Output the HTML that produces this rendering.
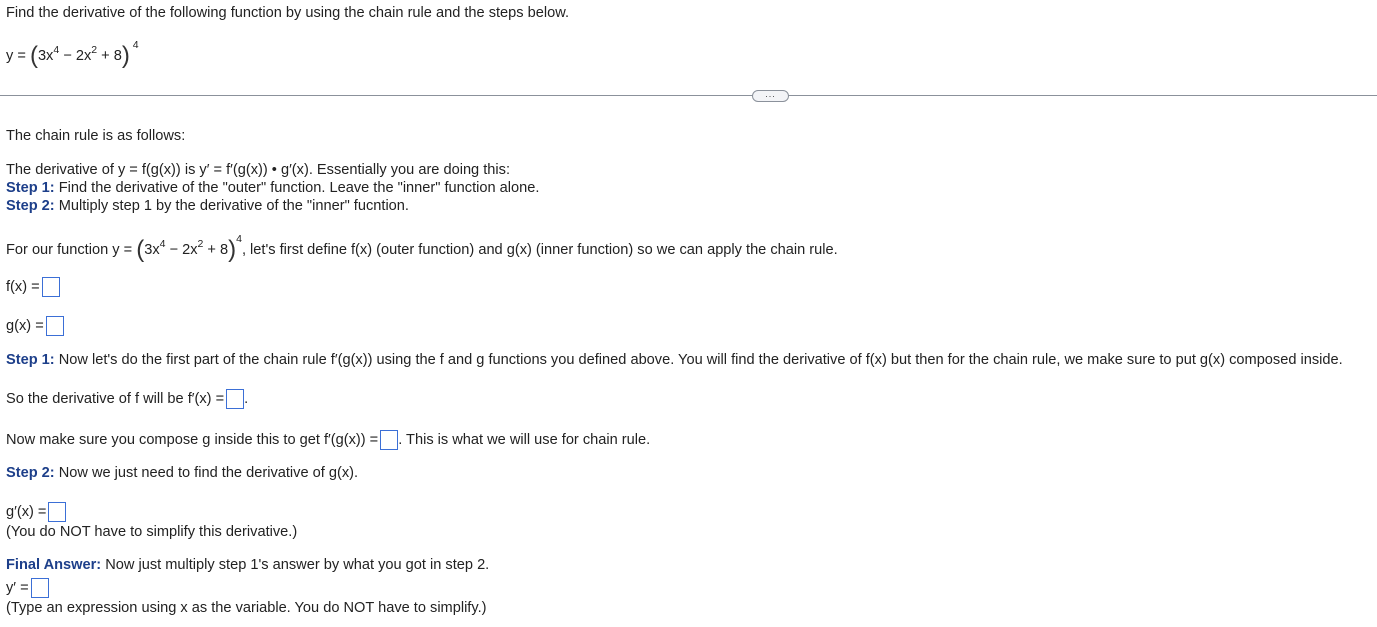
<!DOCTYPE html>
<html><head><style>
body{margin:0;width:1377px;height:627px;background:#fff;font-family:"Liberation Sans",Arial,sans-serif;font-size:14.6px;color:#222;position:relative;overflow:hidden}
.l{position:absolute;left:6px;white-space:nowrap;line-height:16px;margin-top:1px}
b{color:#1d3f8a}
.bx{display:inline-block;width:18px;height:20px;border:1px solid #3b6fd6;vertical-align:middle;margin-left:2px;box-sizing:border-box}
.p{font-size:24px;font-weight:300;vertical-align:-3px;color:#333}
sup{font-size:10.5px;vertical-align:7px;line-height:0}
.hr{position:absolute;left:0;width:1377px;top:95px;height:1px;background:#8b919b}
.pill{position:absolute;left:752px;top:90px;width:35px;height:10px;border:1px solid #8b919b;border-radius:6px;background:#f3f4f7;font-size:9px;line-height:6px;text-align:center;color:#444;letter-spacing:1px}
</style></head><body>
<div class="l" style="top:4px">Find the derivative of the following function by using the chain rule and the steps below.</div>
<div class="l" style="top:44px">y = <span class="p">(</span>3x<sup>4</sup> − 2x<sup>2</sup> + 8<span class="p">)</span><sup style="vertical-align:12px"> 4</sup></div>
<div class="hr"></div><div class="pill">...</div>
<div class="l" style="top:127px">The chain rule is as follows:</div>
<div class="l" style="top:161px">The derivative of y = f(g(x)) is y′ = f′(g(x)) • g′(x). Essentially you are doing this:</div>
<div class="l" style="top:179px"><b>Step 1:</b> Find the derivative of the "outer" function. Leave the "inner" function alone.</div>
<div class="l" style="top:197px"><b>Step 2:</b> Multiply step 1 by the derivative of the "inner" fucntion.</div>
<div class="l" style="top:238px">For our function y = <span class="p">(</span>3x<sup>4</sup> − 2x<sup>2</sup> + 8<span class="p">)</span><sup style="vertical-align:12px">4</sup>, let's first define f(x) (outer function) and g(x) (inner function) so we can apply the chain rule.</div>
<div class="l" style="top:276px">f(x) =<span class="bx"></span></div>
<div class="l" style="top:315px">g(x) =<span class="bx"></span></div>
<div class="l" style="top:351px"><b>Step 1:</b> Now let's do the first part of the chain rule f′(g(x)) using the f and g functions you defined above. You will find the derivative of f(x) but then for the chain rule, we make sure to put g(x) composed inside.</div>
<div class="l" style="top:388px">So the derivative of f will be f′(x) =<span class="bx"></span>.</div>
<div class="l" style="top:429px">Now make sure you compose g inside this to get f′(g(x)) =<span class="bx"></span>. This is what we will use for chain rule.</div>
<div class="l" style="top:464px"><b>Step 2:</b> Now we just need to find the derivative of g(x).</div>
<div class="l" style="top:501px">g′(x) =<span class="bx"></span></div>
<div class="l" style="top:523px">(You do NOT have to simplify this derivative.)</div>
<div class="l" style="top:556px"><b>Final Answer:</b> Now just multiply step 1's answer by what you got in step 2.</div>
<div class="l" style="top:577px">y′ =<span class="bx"></span></div>
<div class="l" style="top:599px">(Type an expression using x as the variable. You do NOT have to simplify.)</div>
</body></html>
